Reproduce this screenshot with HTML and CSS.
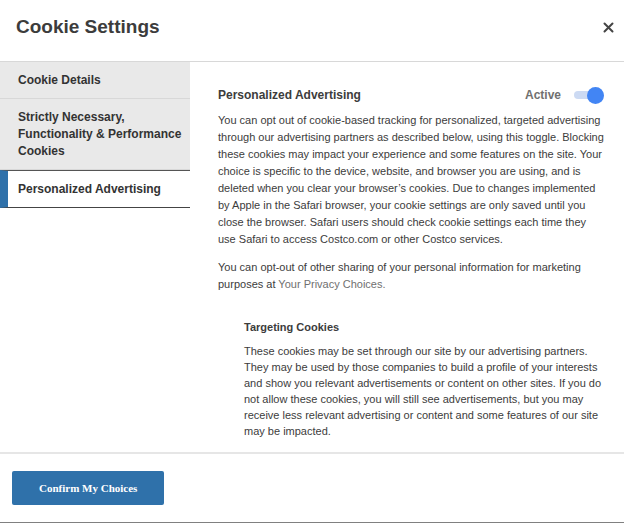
FILE: index.html
```html
<!DOCTYPE html>
<html lang="en">
<head>
  <meta charset="UTF-8">
  <title>Cookie Settings</title>
  <meta name="viewport" content="width=device-width, initial-scale=1.0">
  <link rel="stylesheet" href="styles.css">
</head>
<body>

<div class="modal">
  <header class="header">
    <h1>Cookie Settings</h1>
    <button class="close" type="button" aria-label="Close">
      <svg width="11" height="11" viewBox="0 0 11 11"><path d="M1.5 1.5 L9.5 9.5 M9.5 1.5 L1.5 9.5"/></svg>
    </button>
  </header>

  <div class="main">
    <!-- Side tabs -->
    <nav class="tabs">
      <button class="tab" type="button">Cookie Details</button>
      <button class="tab" type="button">Strictly Necessary, Functionality &amp; Performance Cookies</button>
      <button class="tab active" type="button">Personalized Advertising</button>
    </nav>

    <!-- Selected category -->
    <section class="content">
      <div class="title-row">
        <h2>Personalized Advertising</h2>
        <label class="switch">
          <span>Active</span>
          <input type="checkbox" checked>
        </label>
      </div>
      <p>You can opt out of cookie-based tracking for personalized, targeted advertising through our advertising partners as described below, using this toggle. Blocking these cookies may impact your experience and some features on the site. Your choice is specific to the device, website, and browser you are using, and is deleted when you clear your browser’s cookies. Due to changes implemented by Apple in the Safari browser, your cookie settings are only saved until you close the browser. Safari users should check cookie settings each time they use Safari to access Costco.com or other Costco services.</p>
      <p>You can opt-out of other sharing of your personal information for marketing purposes at <a href="#">Your Privacy Choices.</a></p>

      <div class="group">
        <h3>Targeting Cookies</h3>
        <p>These cookies may be set through our site by our advertising partners. They may be used by those companies to build a profile of your interests and show you relevant advertisements or content on other sites. If you do not allow these cookies, you will still see advertisements, but you may receive less relevant advertising or content and some features of our site may be impacted.</p>
      </div>
    </section>
  </div>

  <footer class="footer">
    <button class="confirm" type="button">Confirm My Choices</button>
  </footer>
</div>

</body>
</html>
```
FILE: styles.css
```css
* {
  box-sizing: border-box;
}

body {
  margin: 0;
  min-height: 100vh;
  padding-bottom: 1px;
  display: flex;
  background: #808080;
  font-family: "Liberation Sans", Arial, sans-serif;
  font-size: 11px;
  color: #3c3c3c;
}

h1, h2, h3, p {
  margin: 0;
}

.modal {
  flex: 1;
  display: flex;
  flex-direction: column;
  background: white;
}

.header {
  display: flex;
  justify-content: space-between;
  align-items: center;
  padding: 16px 10px 23px 16px;
  border-bottom: 1px solid #d8d8d8;
}

.header h1 {
  font-size: 19px;
  line-height: 22px;
}

.close {
  display: flex;
  padding: 0;
  border: none;
  background: none;
  cursor: pointer;
}

.close svg {
  fill: none;
  stroke: #444;
  stroke-width: 2;
  stroke-linecap: round;
}

.main {
  flex: 1;
  display: flex;
}

.tabs {
  width: 190px;
  flex-shrink: 0;
}

.tab {
  display: block;
  width: 100%;
  padding: 10px 8px 9px 18px;
  border: none;
  border-bottom: 1px solid #d8d8d8;
  background: #e9e9e9;
  color: #333;
  font-family: inherit;
  font-size: 12px;
  font-weight: bold;
  line-height: 17px;
  text-align: left;
  cursor: pointer;
}

.tab.active {
  padding-left: 10px;
  border-top: 1px solid #555;
  border-bottom: 1px solid #444;
  border-left: 8px solid #2f71aa;
  background: white;
}

.content {
  flex: 1;
  padding: 24px 18px 13px 28px;
}

.title-row {
  display: flex;
  justify-content: space-between;
  align-items: center;
  padding-right: 2px;
  margin-bottom: 8px;
}

.title-row h2 {
  font-size: 12px;
}

.switch {
  display: flex;
  align-items: center;
  gap: 13px;
  color: #707070;
  font-size: 12px;
  font-weight: bold;
  cursor: pointer;
}

.switch input {
  appearance: none;
  width: 30px;
  height: 8px;
  margin: 5px 0;
  border-radius: 4px;
  background: #ccdaf3;
  display: flex;
  align-items: center;
  justify-content: flex-end;
}

.switch input::before {
  content: "";
  width: 17px;
  height: 17px;
  border-radius: 50%;
  background: #4285f4;
}

.content p {
  margin-bottom: 11px;
  line-height: 17px;
}

.content a {
  color: #707070;
  text-decoration: none;
}

.group {
  padding: 15px 0 0 26px;
}

.group h3 {
  margin-bottom: 8px;
  font-size: 11px;
  line-height: 16px;
}

.content .group p {
  margin: 0;
  line-height: 16px;
}

.footer {
  padding: 17px 12px;
  border-top: 2px solid #e6e6e6;
}

.confirm {
  display: block;
  padding: 8px 27px;
  border: none;
  border-radius: 2px;
  background: #2f71aa;
  color: white;
  font-family: "Liberation Serif", "Times New Roman", serif;
  font-size: 11px;
  font-weight: bold;
  line-height: 18px;
  cursor: pointer;
}
```
